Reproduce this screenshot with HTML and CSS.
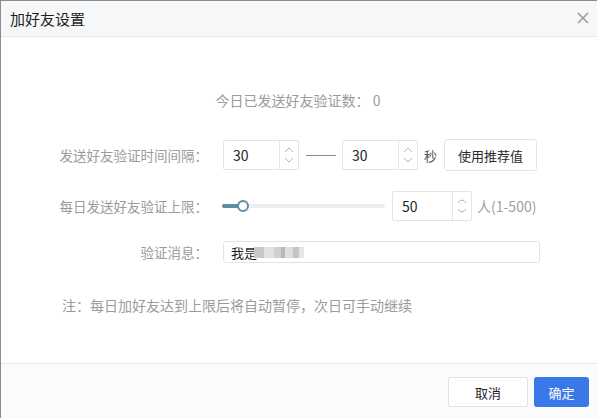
FILE: index.html
```html
<!DOCTYPE html>
<html lang="zh-CN">
<head>
<meta charset="utf-8">
<title>加好友设置</title>
<link rel="stylesheet" href="styles.css">
</head>
<body>
<div class="dialog">
  <div class="titlebar">
    <span class="title">加好友设置</span>
    <svg class="close" width="12" height="12" viewBox="0 0 12 12"><path d="M1 1 L11 11 M11 1 L1 11" stroke="#9a9a9a" stroke-width="1.5" fill="none"/></svg>
  </div>
  <div class="content">
    <div class="counter">今日已发送好友验证数：&nbsp;0</div>
    <div class="form">
      <div class="label r1">发送好友验证时间间隔：</div>
      <div class="field r1">
        <div class="num w76">
          <span class="val">30</span>
          <span class="spin">
            <svg width="10" height="6" viewBox="0 0 10 6"><path d="M1 5 L5 1 L9 5" stroke="#b5b5b5" fill="none" stroke-width="1"/></svg>
            <svg width="10" height="6" viewBox="0 0 10 6"><path d="M1 1 L5 5 L9 1" stroke="#b5b5b5" fill="none" stroke-width="1"/></svg>
          </span>
        </div>
        <span class="dash"></span>
        <div class="num w76">
          <span class="val">30</span>
          <span class="spin">
            <svg width="10" height="6" viewBox="0 0 10 6"><path d="M1 5 L5 1 L9 5" stroke="#b5b5b5" fill="none" stroke-width="1"/></svg>
            <svg width="10" height="6" viewBox="0 0 10 6"><path d="M1 1 L5 5 L9 1" stroke="#b5b5b5" fill="none" stroke-width="1"/></svg>
          </span>
        </div>
        <span class="unit">秒</span>
        <button class="btn-rec">使用推荐值</button>
      </div>

      <div class="label r2">每日发送好友验证上限：</div>
      <div class="field r2">
        <div class="slider">
          <div class="track"></div>
          <div class="fill"></div>
          <div class="thumb"></div>
        </div>
        <div class="num w80">
          <span class="val">50</span>
          <span class="spin">
            <svg width="10" height="6" viewBox="0 0 10 6"><path d="M1 5 Q5 -1 9 5" stroke="#b5b5b5" fill="none" stroke-width="1"/></svg>
            <svg width="10" height="6" viewBox="0 0 10 6"><path d="M1 1 Q5 7 9 1" stroke="#b5b5b5" fill="none" stroke-width="1"/></svg>
          </span>
        </div>
        <span class="range">人(1-500)</span>
      </div>

      <div class="label r3">验证消息：</div>
      <div class="field r3">
        <div class="msg"><span>我是</span><span class="blur"></span></div>
      </div>
    </div>
    <div class="note">注：每日加好友达到上限后将自动暂停，次日可手动继续</div>
  </div>
  <div class="footer">
    <button class="btn-cancel">取消</button>
    <button class="btn-ok">确定</button>
  </div>
</div>
</body>
</html>
```

FILE: styles.css
```css
* { box-sizing: border-box; }
html, body { margin: 0; padding: 0; background: #fff; }
body {
  font-family: "Noto Sans CJK SC", "Noto Sans", sans-serif;
  font-size: 13px;
}
.dialog {
  width: 597px;
  height: 418px;
  border-top: 1px solid #8c8c8c;
  border-left: 1px solid #8c8c8c;
  display: flex;
  flex-direction: column;
  background: #fff;
}
.titlebar {
  height: 36px;
  flex: none;
  background: #f6f7f9;
  border-bottom: 1px solid #e4e6ea;
  display: flex;
  align-items: center;
  justify-content: space-between;
  padding: 0 8px 0 9px;
}
.title {
  font-size: 15px;
  color: #1f1f1f;
  line-height: 20px;
}
.close { display: block; margin-top: -2px; }
.content {
  flex: 1;
  display: flex;
  flex-direction: column;
}
.counter {
  margin-top: 53px;
  text-align: center;
  color: #9b9b9b;
  line-height: 20px;
  font-size: 14px;
  padding-right: 2px;
}
.form {
  margin-top: 29px;
  display: grid;
  grid-template-columns: 207px 1fr;
  grid-template-rows: 32px 30px 22px;
  column-gap: 15px;
  row-gap: 20px;
}
.label {
  text-align: right;
  color: #9b9b9b;
  font-size: 13.5px;
  display: flex;
  align-items: center;
  justify-content: flex-end;
  white-space: nowrap;
}
.field {
  display: flex;
  align-items: center;
}
.num {
  height: 30px;
  border: 1px solid #e2e4e8;
  border-radius: 2px;
  display: flex;
  align-items: stretch;
  background: #fff;
}
.w76 { width: 76px; }
.w80 { width: 80px; height: 30px; }
.val {
  flex: 1;
  padding-left: 9px;
  display: flex;
  align-items: center;
  color: #1f1f1f;
  font-size: 14px;
}
.spin {
  width: 19px;
  border-left: 1px solid #e6e6e6;
  display: flex;
  flex-direction: column;
  align-items: center;
  justify-content: space-around;
  padding: 4px 0;
}
.spin svg { display: block; }
.dash {
  width: 30px;
  height: 1px;
  background: #8e8e8e;
  margin: 0 6px 0 7px;
}
.unit {
  color: #555;
  margin-left: 6px;
  font-size: 13px;
}
.btn-rec {
  margin-left: 7px;
  width: 93px;
  height: 32px;
  border: 1px solid #e2e4e8;
  border-radius: 3px;
  background: #fff;
  color: #2b2b2b;
  font-family: inherit;
  font-size: 13px;
  padding: 0;
}
.slider {
  position: relative;
  width: 163px;
  height: 14px;
  margin-right: 7px;
  margin-left: -1px;
}
.track {
  position: absolute;
  left: 0; right: 0; top: 5px;
  height: 4px;
  border-radius: 2px;
  background: #eceef1;
}
.fill {
  position: absolute;
  left: 0; top: 5px;
  width: 21px;
  height: 4px;
  border-radius: 2px;
  background: #5e8ca4;
}
.thumb {
  position: absolute;
  left: 15px; top: 1px;
  width: 12px;
  height: 12px;
  border-radius: 50%;
  border: 2px solid #5e8ca4;
  background: #fff;
}
.range {
  margin-left: 5px;
  color: #a0a0a0;
  font-size: 14px;
}
.msg {
  width: 317px;
  height: 22px;
  border: 1px solid #e2e4e8;
  border-radius: 3px;
  display: flex;
  align-items: center;
  padding-left: 7px;
  color: #1f1f1f;
  font-size: 13px;
}
.blur {
  display: inline-block;
  width: 50px;
  height: 11px;
  margin-left: -3px;
  background: linear-gradient(90deg, #c8c8c8 0 20%, #e2e2e2 20% 40%, #d0d0d0 40% 55%, #b8b8b8 55% 62%, #dedede 62% 78%, #c4c4c4 78% 90%, #e6e6e6 90%);
  filter: blur(0.6px);
}
.note {
  margin-top: 32px;
  padding-left: 61px;
  color: #9b9b9b;
  font-size: 14px;
  line-height: 20px;
}
.footer {
  height: 55px;
  flex: none;
  border-top: 1px solid #e6e7ea;
  background: #fafbfc;
  display: flex;
  justify-content: flex-end;
  align-items: flex-start;
  padding: 13px 8px 0 0;
  gap: 6px;
}
.footer button {
  height: 30px;
  font-family: inherit;
  font-size: 13px;
  padding: 0;
}
.btn-cancel {
  width: 80px;
  background: #fff;
  border: 1px solid #e0e2e6;
  border-radius: 2px;
  color: #1f1f1f;
}
.btn-ok {
  width: 55px;
  background: #3b78e7;
  border: none;
  border-radius: 3px;
  color: #fff;
}
```
